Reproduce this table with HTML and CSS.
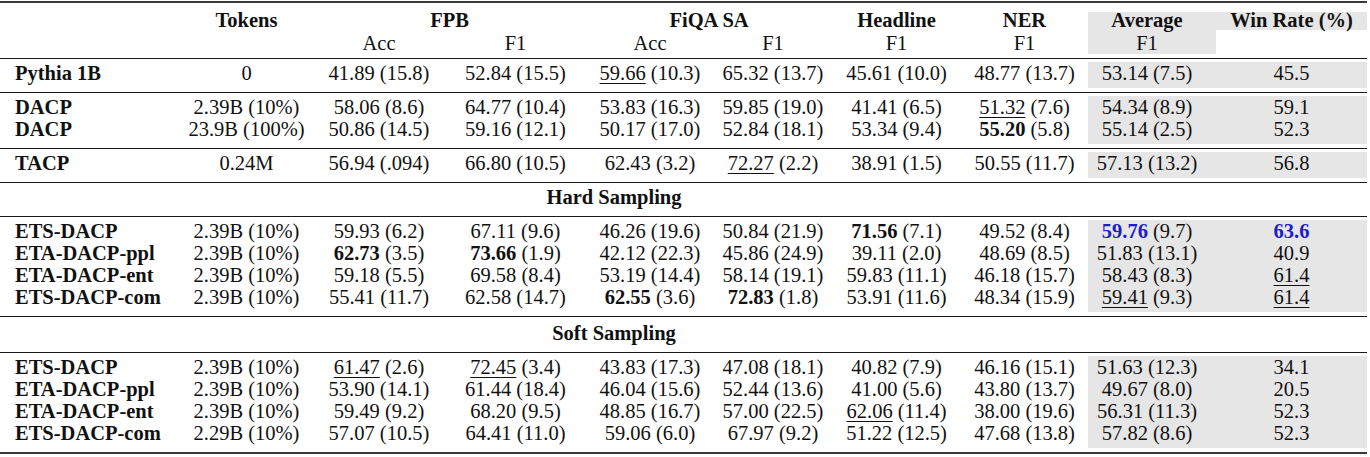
FILE: index.html
```html
<!DOCTYPE html>
<html lang="en">
<head>
<meta charset="utf-8">
<title>Results table</title>
<link rel="stylesheet" href="styles.css">
</head>
<body>
<table class="results">
  <colgroup>
    <col class="c-name"><col class="c-tok"><col class="c-fpba"><col class="c-fpbf"><col class="c-fiqa">
    <col class="c-fiqf"><col class="c-head"><col class="c-ner"><col class="c-avg"><col class="c-win">
  </colgroup>
  <thead>
    <tr class="h1">
      <th></th>
      <th class="b">Tokens</th>
      <th class="b" colspan="2">FPB</th>
      <th class="b" colspan="2">FiQA SA</th>
      <th class="b">Headline</th>
      <th class="b">NER</th>
      <th class="b avg g">Average</th>
      <th class="b win g">Win Rate (%)</th>
    </tr>
    <tr class="h2">
      <th></th>
      <th></th>
      <th>Acc</th>
      <th>F1</th>
      <th>Acc</th>
      <th>F1</th>
      <th>F1</th>
      <th>F1</th>
      <th class="avg g">F1</th>
      <th></th>
    </tr>
  </thead>
  <tbody>
    <tr class="first last">
      <td class="name">Pythia 1B</td><td>0</td><td>41.89 (15.8)</td><td>52.84 (15.5)</td><td><span class="u">59.66</span> (10.3)</td><td>65.32 (13.7)</td><td>45.61 (10.0)</td><td>48.77 (13.7)</td><td class="avg g">53.14 (7.5)</td><td class="win g">45.5</td>
    </tr>
  </tbody>
  <tbody>
    <tr class="first">
      <td class="name">DACP</td><td>2.39B (10%)</td><td>58.06 (8.6)</td><td>64.77 (10.4)</td><td>53.83 (16.3)</td><td>59.85 (19.0)</td><td>41.41 (6.5)</td><td><span class="u">51.32</span> (7.6)</td><td class="avg g">54.34 (8.9)</td><td class="win g">59.1</td>
    </tr>
    <tr class="last">
      <td class="name">DACP</td><td>23.9B (100%)</td><td>50.86 (14.5)</td><td>59.16 (12.1)</td><td>50.17 (17.0)</td><td>52.84 (18.1)</td><td>53.34 (9.4)</td><td><span class="b">55.20</span> (5.8)</td><td class="avg g">55.14 (2.5)</td><td class="win g">52.3</td>
    </tr>
  </tbody>
  <tbody>
    <tr class="first last">
      <td class="name">TACP</td><td>0.24M</td><td>56.94 (.094)</td><td>66.80 (10.5)</td><td>62.43 (3.2)</td><td><span class="u">72.27</span> (2.2)</td><td>38.91 (1.5)</td><td>50.55 (11.7)</td><td class="avg g">57.13 (13.2)</td><td class="win g">56.8</td>
    </tr>
  </tbody>
  <tbody>
    <tr class="section hard">
      <td class="b" colspan="9">Hard Sampling</td><td></td>
    </tr>
  </tbody>
  <tbody>
    <tr class="first">
      <td class="name">ETS-DACP</td><td>2.39B (10%)</td><td>59.93 (6.2)</td><td>67.11 (9.6)</td><td>46.26 (19.6)</td><td>50.84 (21.9)</td><td><span class="b">71.56</span> (7.1)</td><td>49.52 (8.4)</td><td class="avg g"><span class="best">59.76</span> (9.7)</td><td class="win g"><span class="best">63.6</span></td>
    </tr>
    <tr>
      <td class="name">ETA-DACP-ppl</td><td>2.39B (10%)</td><td><span class="b">62.73</span> (3.5)</td><td><span class="b">73.66</span> (1.9)</td><td>42.12 (22.3)</td><td>45.86 (24.9)</td><td>39.11 (2.0)</td><td>48.69 (8.5)</td><td class="avg g">51.83 (13.1)</td><td class="win g">40.9</td>
    </tr>
    <tr>
      <td class="name">ETA-DACP-ent</td><td>2.39B (10%)</td><td>59.18 (5.5)</td><td>69.58 (8.4)</td><td>53.19 (14.4)</td><td>58.14 (19.1)</td><td>59.83 (11.1)</td><td>46.18 (15.7)</td><td class="avg g">58.43 (8.3)</td><td class="win g"><span class="u">61.4</span></td>
    </tr>
    <tr class="last">
      <td class="name">ETS-DACP-com</td><td>2.39B (10%)</td><td>55.41 (11.7)</td><td>62.58 (14.7)</td><td><span class="b">62.55</span> (3.6)</td><td><span class="b">72.83</span> (1.8)</td><td>53.91 (11.6)</td><td>48.34 (15.9)</td><td class="avg g"><span class="u">59.41</span> (9.3)</td><td class="win g"><span class="u">61.4</span></td>
    </tr>
  </tbody>
  <tbody>
    <tr class="section soft">
      <td class="b" colspan="9">Soft Sampling</td><td></td>
    </tr>
  </tbody>
  <tbody>
    <tr class="first">
      <td class="name">ETS-DACP</td><td>2.39B (10%)</td><td><span class="u">61.47</span> (2.6)</td><td><span class="u">72.45</span> (3.4)</td><td>43.83 (17.3)</td><td>47.08 (18.1)</td><td>40.82 (7.9)</td><td>46.16 (15.1)</td><td class="avg g">51.63 (12.3)</td><td class="win g">34.1</td>
    </tr>
    <tr>
      <td class="name">ETA-DACP-ppl</td><td>2.39B (10%)</td><td>53.90 (14.1)</td><td>61.44 (18.4)</td><td>46.04 (15.6)</td><td>52.44 (13.6)</td><td>41.00 (5.6)</td><td>43.80 (13.7)</td><td class="avg g">49.67 (8.0)</td><td class="win g">20.5</td>
    </tr>
    <tr>
      <td class="name">ETA-DACP-ent</td><td>2.39B (10%)</td><td>59.49 (9.2)</td><td>68.20 (9.5)</td><td>48.85 (16.7)</td><td>57.00 (22.5)</td><td><span class="u">62.06</span> (11.4)</td><td>38.00 (19.6)</td><td class="avg g">56.31 (11.3)</td><td class="win g">52.3</td>
    </tr>
    <tr class="last">
      <td class="name">ETS-DACP-com</td><td>2.29B (10%)</td><td>57.07 (10.5)</td><td>64.41 (11.0)</td><td>59.06 (6.0)</td><td>67.97 (9.2)</td><td>51.22 (12.5)</td><td>47.68 (13.8)</td><td class="avg g">57.82 (8.6)</td><td class="win g">52.3</td>
    </tr>
  </tbody>
</table>
</body>
</html>
```

FILE: styles.css
```css
html, body {
  margin: 0;
  padding: 0;
  background: #ffffff;
}

body {
  color: #111111;
  font-family: "Liberation Serif", "Times New Roman", serif;
  font-size: 20.5px;
}

.results {
  width: 1367px;
  table-layout: fixed;
  border-collapse: separate;
  border-spacing: 0;
  margin-top: 1px;
  border-top: 2px solid #3a3a3a;
  border-bottom: 2px solid #3a3a3a;
}

.c-name { width: 180px; }
.c-tok  { width: 133px; }
.c-fpba { width: 132px; }
.c-fpbf { width: 141px; }
.c-fiqa { width: 128px; }
.c-fiqf { width: 118px; }
.c-head { width: 129px; }
.c-ner  { width: 127px; }
.c-avg  { width: 128px; }
.c-win  { width: 151px; }

.results th,
.results td {
  padding: 0;
  line-height: 22px;
  text-align: center;
  white-space: nowrap;
  font-weight: normal;
  vertical-align: top;
}

/* grey shading for the summary columns, with white gaps next to the rules */
.g {
  --gt: 0px;
  --gb: 0px;
  background-image: linear-gradient(to bottom,
    transparent var(--gt),
    #e6e6e6 var(--gt),
    #e6e6e6 calc(100% - var(--gb)),
    transparent calc(100% - var(--gb)));
  background-repeat: no-repeat;
}

.results .avg { padding-right: 10px; }

/* header */
.h1 > th {
  line-height: 16px;
  padding-top: 9px;
  padding-bottom: 2px;
}
.h1 > .g { --gt: 9px; }

.h2 > th {
  padding-top: 2px;
  padding-bottom: 4px;
  border-bottom: 1px solid #1a1a1a;
}
.h2 > .g { --gb: 4px; }

/* body groups */
.results .name {
  text-align: left;
  padding-left: 15px;
  font-weight: bold;
}

.first > td { padding-top: 3px; }
.first > .g { --gt: 3px; }

.last > td {
  padding-bottom: 8px;
  border-bottom: 1px solid #1a1a1a;
}
.last > .g { --gb: 4px; }

.results tbody:last-child .last > td { border-bottom: 0; }

.section > td {
  border-bottom: 1px solid #1a1a1a;
}
.section > td:first-child { padding-left: 12px; }
.hard > td { padding-top: 3px; padding-bottom: 8px; }
.soft > td { padding-top: 5px; padding-bottom: 8px; }

.results .b { font-weight: bold; }

.u {
  text-decoration: underline;
  text-decoration-thickness: 1px;
  text-underline-offset: 3px;
}

.results .best {
  color: #1d1dcc;
  font-weight: bold;
}
```
